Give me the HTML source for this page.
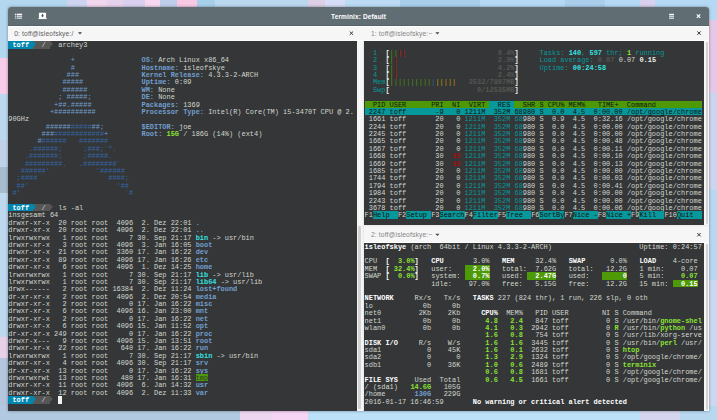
<!DOCTYPE html>
<html><head><meta charset="utf-8"><title>Terminix: Default</title>
<style>
html,body{margin:0;padding:0}
body{width:717px;height:420px;overflow:hidden;position:relative;background:#b4d7f0;font-family:"Liberation Sans",sans-serif}
.abs{position:absolute}
#wall div{position:absolute}
#win{position:absolute;left:8px;top:7px;width:701px;height:403.8px;background:#f6f6f6;border-radius:3px 3px 0 0;box-shadow:0 0 3px rgba(0,0,0,.4);overflow:hidden}
#hdr{position:absolute;left:0;top:0;width:701px;height:18.5px;background:#606d73;box-shadow:inset 0 -.6px 0 rgba(0,0,0,.18)}
#title{position:absolute;left:0;width:701px;top:5.9px;text-align:center;color:#fff;font-weight:bold;font-size:6.5px;line-height:8px;letter-spacing:.14px}
.tab{position:absolute;color:#5e5e5e;font-size:6.7px;line-height:8px;white-space:pre;letter-spacing:.14px}
.tab.dim{color:#858585}
.term{position:absolute;background:#343637;overflow:hidden}
.tx{position:absolute;font-family:"Liberation Mono",monospace;font-size:6.94px;color:#d3d7cf}
.r{height:7.4px;line-height:9.4px;white-space:pre}
.b{font-weight:bold}
.g{display:inline-block;height:7.4px;vertical-align:top}
.a{width:4.163px;position:relative}
.a i{position:absolute;left:0;top:0;width:0;height:0;border-top:3.7px solid transparent;border-bottom:3.7px solid transparent;border-left:3.6px solid #000}
.sl{position:absolute;background:#d2d2d2;border-radius:1px}
svg{position:absolute;overflow:visible}
</style></head><body>
<div id="wall">
<div style="left:0;top:57.7px;width:12px;height:36.3px;background:#f8cce8"></div>
<div style="left:0;top:94px;width:12px;height:46.0px;background:#bcd8ee"></div>
<div style="left:0;top:140px;width:12px;height:27.0px;background:#c0d2ea"></div>
<div style="left:0;top:167px;width:12px;height:26.0px;background:#a8bccf"></div>
<div style="left:0;top:193px;width:12px;height:144.0px;background:#bed8f0"></div>
<div style="left:0;top:337px;width:12px;height:21.0px;background:#e8d0e8"></div>
<div style="left:0;top:358px;width:12px;height:62.0px;background:#b4c6de"></div>
<div style="left:705px;top:0px;width:12px;height:20.0px;background:#b5d9f5"></div>
<div style="left:705px;top:20px;width:12px;height:73.0px;background:#e5c8e5"></div>
<div style="left:705px;top:93px;width:12px;height:97.0px;background:#ccd4ee"></div>
<div style="left:705px;top:190px;width:12px;height:90.0px;background:#b8d8f2"></div>
<div style="left:705px;top:280px;width:12px;height:140.0px;background:#ccd8f0"></div>
<div style="left:67px;top:0;width:20px;height:12px;background:#cdd3f0"></div>
<div style="left:87px;top:0;width:20px;height:12px;background:#f2d6ee"></div><div style="left:107px;top:0;width:16px;height:12px;background:#e6d2ec"></div>
<div style="left:123px;top:0;width:22px;height:12px;background:#d8d0ee"></div>
<div style="left:145px;top:0;width:15px;height:12px;background:#f8d8f0"></div>
<div style="left:160px;top:0;width:17px;height:12px;background:#c0cdea"></div>
<div style="left:177px;top:0;width:20px;height:12px;background:#f8c8e5"></div>
<div style="left:197px;top:0;width:18px;height:12px;background:#a8cfea"></div>
<div style="left:215px;top:0;width:93px;height:12px;background:#bcd8f0"></div>
<div style="left:308px;top:0;width:17px;height:12px;background:#dccfe6"></div>
<div style="left:325px;top:0;width:20px;height:12px;background:#d5dcf5"></div>
<div style="left:345px;top:0;width:55px;height:12px;background:#bcdcf5"></div>
<div style="left:400px;top:0;width:80px;height:12px;background:#a8cfea"></div>
<div style="left:480px;top:0;width:85px;height:12px;background:#b5d9f5"></div>
<div style="left:565px;top:0;width:40px;height:12px;background:#a9cdeb"></div>
<div style="left:605px;top:0;width:35px;height:12px;background:#b5d9f5"></div>
<div style="left:640px;top:0;width:15px;height:12px;background:#d8d0ec"></div>
<div style="left:655px;top:0;width:62px;height:12px;background:#b5d9f5"></div>
<div style="left:0px;top:406px;width:240px;height:14px;background:#b2c9e2"></div>
<div style="left:240px;top:406px;width:32px;height:14px;background:#ecd6f0"></div>
<div style="left:272px;top:406px;width:36px;height:14px;background:#f6d4f4"></div>
<div style="left:308px;top:406px;width:332px;height:14px;background:#bce0f8"></div>
<div style="left:640px;top:406px;width:40px;height:14px;background:#d5d5f0"></div>
<div style="left:680px;top:406px;width:37px;height:14px;background:#b8d8f0"></div>
</div>
<div id="win">
 <div id="hdr"></div>
 <div id="title">Terminix: Default</div>
 <!-- header icons -->
 <svg style="left:0;top:0" width="701" height="19" viewBox="0 0 701 19">
  <g fill="#fff">
   <rect x="6.9" y="6.7" width="1" height="1.4"/><rect x="8.6" y="6.7" width="5.5" height="1.4"/>
   <g fill="#cdd2d4"><rect x="6.9" y="8.6" width="1" height="1.4"/><rect x="8.6" y="8.6" width="5.5" height="1.4"/>
   <rect x="6.9" y="10.5" width="1" height="1.4"/><rect x="8.6" y="10.5" width="5.5" height="1.4"/></g>
   <rect x="30.9" y="5.85" width="7.2" height="5.1" rx=".7"/>
   <rect x="30.4" y="11.05" width="8.3" height="1"/>
   <path d="M33.9 6.9h1.2v1.6h1.1l-1.7 1.8-1.7-1.8h1.1z" fill="#4d585d"/>
   <rect x="661.1" y="6.8" width="4.9" height="1.4"/>
   <g fill="#cdd2d4"><rect x="661.1" y="8.7" width="4.9" height="1.4"/><rect x="661.1" y="10.6" width="4.9" height="1.4"/></g>
  </g>
  <path d="M688.8 7.4l3.5 3.5m0-3.5l-3.5 3.5" stroke="#fff" stroke-width="1.2" fill="none"/>
 </svg>
 <div class="abs" style="left:0;top:18.5px;width:701px;height:.9px;background:#fff"></div>
 <div class="abs" style="left:0;top:33.2px;width:701px;height:.9px;background:#fdfdfd"></div>
 <div class="abs" style="left:356.2px;top:234.6px;width:345px;height:.9px;background:#fdfdfd"></div>
 <!-- tab bars -->
 <div class="tab" style="left:6.2px;top:22.7px">0: toff@isleofskye:/</div>
 <div class="tab dim" style="left:363px;top:22.7px">1: toff@isleofskye:~</div>
 <div class="tab dim" style="left:363px;top:224.1px">2: toff@isleofskye:~</div>
 <svg style="left:0;top:18" width="701" height="386" viewBox="0 18 701 386">
  <path d="M70 25.3h4l-2 2.2z" fill="#444"/>
  <path d="M427.4 25.3h4l-2 2.2z" fill="#444"/>
  <path d="M427.4 226.8h4l-2 2.2z" fill="#444"/>
  <g stroke="#383838" stroke-width="1" fill="none">
   <path d="M341.7 24.5l3.4 3.4m0-3.4l-3.4 3.4"/>
   <path d="M689.3 24.4l3.4 3.4m0-3.4l-3.4 3.4"/>
   <path d="M689.3 226l3.4 3.4m0-3.4l-3.4 3.4"/>
  </g>
  <rect x="356.2" y="218.4" width="345" height=".8" fill="#e4e4e4"/>
  <path d="M355.3 34v370" stroke="#c8c8c8" stroke-width=".6" stroke-dasharray=".8 .8"/>
 </svg>
 <!-- scrollbars -->
 <div class="sl" style="left:350.4px;top:219px;width:2.3px;height:183px"></div>
 <div class="sl" style="left:698.1px;top:34.7px;width:1.9px;height:182px"></div>
 <div class="sl" style="left:698.1px;top:236.6px;width:1.9px;height:166px"></div>
 <!-- left terminal -->
 <div class="term" style="left:0;top:34.1px;width:348.8px;height:369.7px">
  <div class="tx" style="left:.3px;top:.3px">
<div class="r"><span class="b g" style="color:#ffffff;background:#0087af"> toff </span><span class="g a" style="background:#565656;"><i style="border-left-color:#0087af"></i></span><span class="g" style="color:#d0d0d0;background:#565656"> / </span><span class="g a" style=""><i style="border-left-color:#565656"></i></span> archey3</div>
<div class="r"></div>
<div class="r"><span style="color:#729fcf">               +                </span><span class="b" style="color:#729fcf">OS:</span> Arch Linux x86_64</div>
<div class="r"><span style="color:#729fcf">               #                </span><span class="b" style="color:#729fcf">Hostname:</span> isleofskye</div>
<div class="r"><span style="color:#729fcf">              ###               </span><span class="b" style="color:#729fcf">Kernel Release:</span> 4.3.3-2-ARCH</div>
<div class="r"><span style="color:#729fcf">             #####              </span><span class="b" style="color:#729fcf">Uptime:</span> 0:09</div>
<div class="r"><span style="color:#729fcf">             ######             </span><span class="b" style="color:#729fcf">WM:</span> None</div>
<div class="r"><span style="color:#729fcf">            ; #####;            </span><span class="b" style="color:#729fcf">DE:</span> None</div>
<div class="r"><span style="color:#729fcf">           +##.#####            </span><span class="b" style="color:#729fcf">Packages:</span> 1369</div>
<div class="r"><span style="color:#729fcf">          +##########           </span><span class="b" style="color:#729fcf">Processor Type:</span> Intel(R) Core(TM) i5-3470T CPU @ 2.</div>
<div class="r">90GHz</div>
<div class="r"><span style="color:#729fcf">         ######</span><span style="color:#3465a4">#####</span><span style="color:#729fcf">##;         </span><span class="b" style="color:#729fcf">$EDITOR:</span> joe</div>
<div class="r"><span style="color:#729fcf">        ###</span><span style="color:#3465a4">############</span><span style="color:#729fcf">+        </span><span class="b" style="color:#729fcf">Root:</span> <span class="b" style="color:#8ae234">15G</span> / 186G (14%) (ext4)</div>
<div class="r"><span style="color:#729fcf">       #</span><span style="color:#3465a4">######   #######        </span></div>
<div class="r"><span style="color:#3465a4">     .######;     ;###;`".      </span></div>
<div class="r"><span style="color:#3465a4">    .#######;     ;#####.       </span></div>
<div class="r"><span style="color:#3465a4">    #########.   .########`     </span></div>
<div class="r"><span style="color:#3465a4">   ######'           '######    </span></div>
<div class="r"><span style="color:#3465a4">  ;####                 ####;   </span></div>
<div class="r"><span style="color:#3465a4">  ##'                     '##   </span></div>
<div class="r"><span style="color:#3465a4"> #'                         `#  </span></div>
<div class="r"></div>
<div class="r"><span class="b g" style="color:#ffffff;background:#0087af"> toff </span><span class="g a" style="background:#565656;"><i style="border-left-color:#0087af"></i></span><span class="g" style="color:#d0d0d0;background:#565656"> / </span><span class="g a" style=""><i style="border-left-color:#565656"></i></span> ls -al</div>
<div class="r">insgesamt 64</div>
<div class="r">drwxr-xr-x  20 root root  4096  2. Dez 22:01 <span class="b" style="color:#729fcf">.</span></div>
<div class="r">drwxr-xr-x  20 root root  4096  2. Dez 22:01 <span class="b" style="color:#729fcf">..</span></div>
<div class="r">lrwxrwxrwx   1 root root     7 30. Sep 21:17 <span class="b" style="color:#34e2e2">bin</span> -&gt; usr/bin</div>
<div class="r">drwxr-xr-x   3 root root  4096  3. Jan 16:05 <span class="b" style="color:#729fcf">boot</span></div>
<div class="r">drwxr-xr-x  21 root root  3360 17. Jan 16:22 <span class="b" style="color:#729fcf">dev</span></div>
<div class="r">drwxr-xr-x  89 root root  4096 17. Jan 16:26 <span class="b" style="color:#729fcf">etc</span></div>
<div class="r">drwxr-xr-x   6 root root  4096  1. Dez 14:25 <span class="b" style="color:#729fcf">home</span></div>
<div class="r">lrwxrwxrwx   1 root root     7 30. Sep 21:17 <span class="b" style="color:#34e2e2">lib</span> -&gt; usr/lib</div>
<div class="r">lrwxrwxrwx   1 root root     7 30. Sep 21:17 <span class="b" style="color:#34e2e2">lib64</span> -&gt; usr/lib</div>
<div class="r">drwx------   2 root root 16384  2. Dez 11:24 <span class="b" style="color:#729fcf">lost+found</span></div>
<div class="r">dr-xr-xr-x   2 root root  4096  2. Dez 20:54 <span class="b" style="color:#729fcf">media</span></div>
<div class="r">drwxr-xr-x   2 root root     0 17. Jan 16:22 <span class="b" style="color:#729fcf">misc</span></div>
<div class="r">drwxr-xr-x   6 root root  4096 16. Jan 23:00 <span class="b" style="color:#729fcf">mnt</span></div>
<div class="r">drwxr-xr-x   2 root root     0 17. Jan 16:22 <span class="b" style="color:#729fcf">net</span></div>
<div class="r">drwxr-xr-x   6 root root  4096 15. Jan 11:52 <span class="b" style="color:#729fcf">opt</span></div>
<div class="r">dr-xr-xr-x 249 root root     0 17. Jan 16:22 <span class="b" style="color:#729fcf">proc</span></div>
<div class="r">drwxr-x---   9 root root  4096 15. Jan 13:51 <span class="b" style="color:#729fcf">root</span></div>
<div class="r">drwxr-xr-x  22 root root   640 17. Jan 16:22 <span class="b" style="color:#729fcf">run</span></div>
<div class="r">lrwxrwxrwx   1 root root     7 30. Sep 21:17 <span class="b" style="color:#34e2e2">sbin</span> -&gt; usr/bin</div>
<div class="r">drwxr-xr-x   4 root root  4096 30. Sep 21:17 <span class="b" style="color:#729fcf">srv</span></div>
<div class="r">dr-xr-xr-x  13 root root     0 17. Jan 16:22 <span class="b" style="color:#729fcf">sys</span></div>
<div class="r">drwxrwxrwt  13 root root   480 17. Jan 16:31 <span class="g" style="color:#2e3436;background:#4e9a06">tmp</span></div>
<div class="r">drwxr-xr-x  11 root root  4096  6. Jan 14:32 <span class="b" style="color:#729fcf">usr</span></div>
<div class="r">drwxr-xr-x  12 root root  4096  2. Dez 11:33 <span class="b" style="color:#729fcf">var</span></div>
<div class="r"><span class="b g" style="color:#ffffff;background:#0087af"> toff </span><span class="g a" style="background:#565656;"><i style="border-left-color:#0087af"></i></span><span class="g" style="color:#d0d0d0;background:#565656"> / </span><span class="g a" style=""><i style="border-left-color:#565656"></i></span> <span class="g" style="background:#f2f2f2"> </span></div>
  </div>
 </div>
 <!-- htop -->
 <div class="term" style="left:356.2px;top:34.1px;width:339.9px;height:184px">
  <div class="tx" style="left:.4px;top:.3px">
<div class="r"></div>
<div class="r">  <span style="color:#06989a">1</span>  <span class="b" style="color:#eeeeec">[</span><span style="color:#4e9a06">||</span><span style="color:#cc0000">||</span><span class="b" style="color:#555753">                      9.4%</span><span class="b" style="color:#eeeeec">]</span>     <span style="color:#06989a">Tasks: </span><span class="b" style="color:#34e2e2">140</span><span style="color:#06989a">, </span><span class="b" style="color:#34e2e2">597</span><span style="color:#06989a"> thr; </span><span class="b" style="color:#8ae234">1</span><span style="color:#06989a"> running</span></div>
<div class="r">  <span style="color:#06989a">2</span>  <span class="b" style="color:#eeeeec">[</span><span style="color:#4e9a06">|</span><span style="color:#cc0000">|</span><span class="b" style="color:#555753">                        2.9%</span><span class="b" style="color:#eeeeec">]</span>     <span style="color:#06989a">Load average: </span><span class="b" style="color:#555753">0.07</span> <span style="color:#d3d7cf">0.07</span> <span class="b" style="color:#eeeeec">0.15</span></div>
<div class="r">  <span style="color:#06989a">3</span>  <span class="b" style="color:#eeeeec">[</span><span style="color:#4e9a06">|</span><span style="color:#cc0000">|</span><span class="b" style="color:#555753">                        4.2%</span><span class="b" style="color:#eeeeec">]</span>     <span style="color:#06989a">Uptime: </span><span class="b" style="color:#34e2e2">00:24:58</span></div>
<div class="r">  <span style="color:#06989a">4</span>  <span class="b" style="color:#eeeeec">[</span><span style="color:#4e9a06">|</span><span style="color:#cc0000">|</span><span class="b" style="color:#555753">                        2.4%</span><span class="b" style="color:#eeeeec">]</span></div>
<div class="r">  <span style="color:#06989a">Mem</span><span class="b" style="color:#eeeeec">[</span><span style="color:#4e9a06">||||||||||</span><span style="color:#3465a4">|</span><span style="color:#c4a000">|||||</span><span class="b" style="color:#555753">   2532/7807MB</span><span class="b" style="color:#eeeeec">]</span></div>
<div class="r">  <span style="color:#06989a">Swp</span><span class="b" style="color:#eeeeec">[</span><span class="b" style="color:#555753">                     0/12535MB</span><span class="b" style="color:#eeeeec">]</span></div>
<div class="r"></div>
<div class="r"><span class="g" style="color:#101010;background:#4e9a06">  PID USER      PRI  NI  VIRT </span><span class="g" style="color:#101010;background:#06989a">  RES </span><span class="g" style="color:#101010;background:#4e9a06">  SHR S CPU% MEM%   TIME+  Command           </span></div>
<div class="r"><span class="g" style="color:#101010;background:#06989a"> 2247 toff       -9   0 1211M  352M 68980 S  0.0  4.5  0:00.00 /opt/google/chrome</span></div>
<div class="r"> 1661 toff       20   0 <span style="color:#06989a">1211M </span><span style="color:#06989a"> 352M </span><span style="color:#06989a">68</span>980 S  0.9  4.5  0:32.16 /opt/google/chrome</div>
<div class="r"> 2244 toff       20   0 <span style="color:#06989a">1211M </span><span style="color:#06989a"> 352M </span><span style="color:#06989a">68</span>980 S  0.0  4.5  0:00.00 /opt/google/chrome</div>
<div class="r"> 2245 toff       20   0 <span style="color:#06989a">1211M </span><span style="color:#06989a"> 352M </span><span style="color:#06989a">68</span>980 S  0.0  4.5  0:00.00 /opt/google/chrome</div>
<div class="r"> 1665 toff       20   0 <span style="color:#06989a">1211M </span><span style="color:#06989a"> 352M </span><span style="color:#06989a">68</span>980 S  0.0  4.5  0:00.48 /opt/google/chrome</div>
<div class="r"> 1667 toff       20   0 <span style="color:#06989a">1211M </span><span style="color:#06989a"> 352M </span><span style="color:#06989a">68</span>980 S  0.0  4.5  0:00.11 /opt/google/chrome</div>
<div class="r"> 1668 toff       30 <span style="color:#cc0000"> 10 </span><span style="color:#06989a">1211M </span><span style="color:#06989a"> 352M </span><span style="color:#06989a">68</span>980 S  0.0  4.5  0:00.10 /opt/google/chrome</div>
<div class="r"> 1669 toff       30 <span style="color:#cc0000"> 10 </span><span style="color:#06989a">1211M </span><span style="color:#06989a"> 352M </span><span style="color:#06989a">68</span>980 S  0.0  4.5  0:00.13 /opt/google/chrome</div>
<div class="r"> 1685 toff       20   0 <span style="color:#06989a">1211M </span><span style="color:#06989a"> 352M </span><span style="color:#06989a">68</span>980 S  0.0  4.5  0:00.00 /opt/google/chrome</div>
<div class="r"> 1744 toff       20   0 <span style="color:#06989a">1211M </span><span style="color:#06989a"> 352M </span><span style="color:#06989a">68</span>980 S  0.0  4.5  0:00.03 /opt/google/chrome</div>
<div class="r"> 1794 toff       20   0 <span style="color:#06989a">1211M </span><span style="color:#06989a"> 352M </span><span style="color:#06989a">68</span>980 S  0.0  4.5  0:00.41 /opt/google/chrome</div>
<div class="r"> 1984 toff       20   0 <span style="color:#06989a">1211M </span><span style="color:#06989a"> 352M </span><span style="color:#06989a">68</span>980 S  0.0  4.5  0:00.00 /opt/google/chrome</div>
<div class="r"> 2243 toff       20   0 <span style="color:#06989a">1211M </span><span style="color:#06989a"> 352M </span><span style="color:#06989a">68</span>980 S  0.0  4.5  0:00.00 /opt/google/chrome</div>
<div class="r"> 3678 toff       20   0 <span style="color:#06989a">1211M </span><span style="color:#06989a"> 352M </span><span style="color:#06989a">68</span>980 S  0.0  4.5  0:00.06 /opt/google/chrome</div>
<div class="r"><span style="color:#d3d7cf">F1</span><span class="g" style="color:#101010;background:#06989a">Help  </span><span style="color:#d3d7cf">F2</span><span class="g" style="color:#101010;background:#06989a">Setup </span><span style="color:#d3d7cf">F3</span><span class="g" style="color:#101010;background:#06989a">Search</span><span style="color:#d3d7cf">F4</span><span class="g" style="color:#101010;background:#06989a">Filter</span><span style="color:#d3d7cf">F5</span><span class="g" style="color:#101010;background:#06989a">Tree  </span><span style="color:#d3d7cf">F6</span><span class="g" style="color:#101010;background:#06989a">SortBy</span><span style="color:#d3d7cf">F7</span><span class="g" style="color:#101010;background:#06989a">Nice -</span><span style="color:#d3d7cf">F8</span><span class="g" style="color:#101010;background:#06989a">Nice +</span><span style="color:#d3d7cf">F9</span><span class="g" style="color:#101010;background:#06989a">Kill  </span><span style="color:#d3d7cf">F10</span><span class="g" style="color:#101010;background:#06989a">Quit  </span></div>
  </div>
 </div>
 <!-- glances -->
 <div class="term" style="left:356.2px;top:235.5px;width:339.9px;height:168.3px">
  <div class="tx" style="left:.4px;top:.1px">
<div class="r"><span class="b" style="color:#ffffff">isleofskye</span> (arch  64bit / Linux 4.3.3-2-ARCH)                     Uptime: 0:24:57</div>
<div class="r"></div>
<div class="r">CPU  <span class="b" style="color:#ffffff">[</span><span class="b" style="color:#8ae234">  3.0%</span><span class="b" style="color:#ffffff">]</span>   <span class="b" style="color:#ffffff">CPU</span>       3.0%   <span class="b" style="color:#ffffff">MEM</span>     32.4%   <span class="b" style="color:#ffffff">SWAP</span>      0.0%   <span class="b" style="color:#ffffff">LOAD</span>    4-core</div>
<div class="r">MEM  <span class="b" style="color:#ffffff">[</span><span class="b" style="color:#8ae234"> 32.4%</span><span class="b" style="color:#ffffff">]</span>   user:   <span class="b g" style="color:#ffffff;background:#4e9a06">  2.0%</span>   total:  7.62G   total:   12.2G   1 min:    0.07</div>
<div class="r">SWAP <span class="b" style="color:#ffffff">[</span><span class="b" style="color:#8ae234">  0.0%</span><span class="b" style="color:#ffffff">]</span>   system: <span class="b g" style="color:#ffffff;background:#4e9a06">  0.7%</span>   used: <span class="b g" style="color:#ffffff;background:#4e9a06">  2.47G</span>   used:   <span class="b g" style="color:#ffffff;background:#4e9a06">     0</span>   5 min:    <span class="b" style="color:#8ae234">0.07</span></div>
<div class="r">                idle:    97.0%   free:   5.15G   free:    12.2G   15 min: <span class="b g" style="color:#ffffff;background:#4e9a06">  0.15</span></div>
<div class="r"></div>
<div class="r"><span class="b" style="color:#ffffff">NETWORK</span>     Rx/s   Tx/s   <span class="b" style="color:#ffffff">TASKS</span> 227 (824 thr), 1 run, 226 slp, 0 oth</div>
<div class="r">lo            0b     0b</div>
<div class="r">net0         2Kb    2Kb     <span class="b" style="color:#ffffff">CPU%</span>  MEM%   PID USER        NI S Command</div>
<div class="r">net1          0b     0b      <span class="b" style="color:#8ae234">4.8</span>   <span class="b" style="color:#8ae234">2.4</span>   847 toff         0 S /usr/bin/<span class="b" style="color:#8ae234">gnome-shel</span></div>
<div class="r">wlan0         0b     0b      <span class="b" style="color:#8ae234">4.1</span>   <span class="b" style="color:#8ae234">0.3</span>  2942 toff         0 <span class="b" style="color:#8ae234">R</span> /usr/bin/<span class="b" style="color:#8ae234">python</span> /us</div>
<div class="r">                             <span class="b" style="color:#8ae234">1.6</span>   <span class="b" style="color:#8ae234">0.8</span>   754 toff         0 S /usr/lib/xorg-serve</div>
<div class="r"><span class="b" style="color:#ffffff">DISK I/O</span>     R/s    W/s      <span class="b" style="color:#8ae234">1.6</span>   <span class="b" style="color:#8ae234">1.6</span>  3445 toff         0 S /usr/bin/<span class="b" style="color:#8ae234">perl</span> /usr/</div>
<div class="r">sda1           0    45K      <span class="b" style="color:#8ae234">1.6</span>   <span class="b" style="color:#8ae234">0.1</span>  2632 toff         0 S <span class="b" style="color:#8ae234">htop</span></div>
<div class="r">sda2           0      0      <span class="b" style="color:#8ae234">1.3</span>   <span class="b" style="color:#8ae234">2.9</span>  1324 toff         0 S /opt/google/chrome/</div>
<div class="r">sdb1           0    36K      <span class="b" style="color:#8ae234">1.0</span>   <span class="b" style="color:#8ae234">0.6</span>  2489 toff         0 S <span class="b" style="color:#8ae234">terminix</span></div>
<div class="r">                             <span class="b" style="color:#8ae234">0.6</span>   <span class="b" style="color:#8ae234">0.8</span>  1681 toff         0 S /opt/google/chrome/</div>
<div class="r"><span class="b" style="color:#ffffff">FILE SYS</span>    Used  Total      <span class="b" style="color:#8ae234">0.6</span>   <span class="b" style="color:#8ae234">4.5</span>  1661 toff         0 S /opt/google/chrome/</div>
<div class="r">/ (sda1)   <span class="b" style="color:#8ae234">14.6G</span>   105G</div>
<div class="r">/home       <span class="b" style="color:#729fcf">130G</span>   229G</div>
<div class="r">2016-01-17 16:46:59       <span class="b" style="color:#ffffff">No warning or critical alert detected</span></div>
  </div>
 </div>
</div>
</body></html>
